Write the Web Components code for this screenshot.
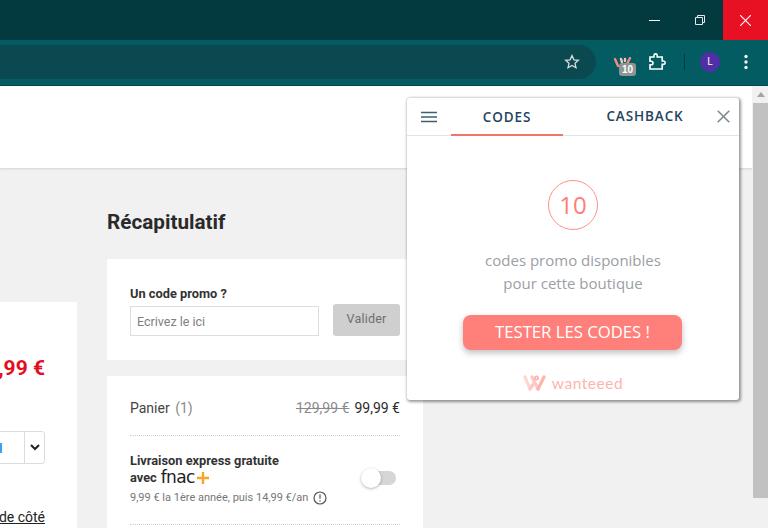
<!DOCTYPE html>
<html lang="fr">
<head>
<meta charset="utf-8">
<title>Récapitulatif</title>
<style>
  html, body { margin: 0; height: 100%; overflow: hidden; }
  body { width: 768px; height: 528px; display: flex; flex-direction: column; font-family: Roboto, sans-serif; background: #f1f1f1; position: relative; }
</style>
</head>
<body>
<browser-chrome></browser-chrome>
<shop-page></shop-page>
<wanteeed-popup></wanteeed-popup>

<script>
class BrowserChrome extends HTMLElement {
  constructor() {
    super();
    this.attachShadow({ mode: "open" });
    this.shadowRoot.innerHTML = /* html */`
    <style>
      :host { display: block; flex: none; }
      .title { height: 40px; background: #023a40; display: flex; justify-content: flex-end; }
      .win { width: 46px; display: grid; place-items: center; }
      .win.close { width: 45px; background: #e81123; }
      .win svg { display: block; }
      .tools { height: 46px; background: #035c62; display: flex; align-items: center; padding-bottom: 1px; box-sizing: border-box; border-bottom: 1px solid #02474c; }
      .url { width: 596px; height: 34px; background: #0b4950; border-radius: 0 17px 17px 0; display: flex; justify-content: flex-end; align-items: center; padding-right: 16px; box-sizing: border-box; }
      .ext { position: relative; width: 24px; height: 24px; margin-left: 17px; }
      .ext svg { display: block; margin-top: 7px; }
      .badge { position: absolute; left: 6px; top: 13px; width: 17px; height: 13px; background: #8f9597; border-radius: 3px; color: #fff; font: 700 10px/13px "Liberation Sans", sans-serif; text-align: center; }
      .puzzle { margin-left: 10px; }
      .sep { width: 1px; height: 16px; background: #023a40; margin-left: 17px; }
      .avatar { width: 20px; height: 20px; border-radius: 50%; background: #512da8; color: #ddd; font: 500 10px/20px Roboto, sans-serif; text-align: center; margin-left: 15px; }
      .dots { margin-left: 24px; display: block; }
    </style>
    <div class="title">
      <div class="win"><svg width="11" height="10"><path d="M0 5.500h11" stroke="#fff"/></svg></div>
      <div class="win"><svg width="10" height="10" fill="none" stroke="#e4e9ea"><path d="M.5 2.500h7v7h-7zM2.500 2.500v-2h7v7h-2"/></svg></div>
      <div class="win close"><svg width="11" height="11" stroke="#fff" stroke-width="1.100"><path d="M0 0l11 11M11 0L0 11"/></svg></div>
    </div>
    <div class="tools">
      <div class="url">
        <svg width="16" height="16" viewBox="0 0 16 16" fill="none" stroke="#d6dddd" stroke-width="1.300"><path d="M8 1.600l1.900 4.200 4.500.5-3.400 3 1 4.500L8 11.500l-4 2.300 1-4.500-3.400-3 4.500-.5z"/></svg>
      </div>
      <div class="ext">
        <svg width="20" height="14" viewBox="0 0 20 14"><g stroke-linecap="round" stroke-width="2.400"><path d="M2 2l3 7" stroke="#f48a84"/><path d="M8 2l1 3" stroke="#f7c6c0"/><path d="M12 2l0 2" stroke="#f7c6c0"/><path d="M17 1l-3 6" stroke="#f48a84"/></g></svg>
        <div class="badge">10</div>
      </div>
      <svg class="puzzle" width="20" height="20" viewBox="0 0 20 20" fill="none" stroke="#fff" stroke-width="1.600"><path d="M3 5h4V3.500a1.600 1.600 0 0 1 3.200 0V5h5v4h1.300a1.700 1.700 0 0 1 0 3.400H15.200V17H3v-4.200h1.200a1.800 1.800 0 0 0 0-3.600H3z"/></svg>
      <div class="sep"></div>
      <div class="avatar">L</div>
      <svg class="dots" width="4" height="16" viewBox="0 0 4 16" fill="#f0f3f3"><circle cx="2" cy="2.500" r="1.700"/><circle cx="2" cy="8" r="1.700"/><circle cx="2" cy="13.500" r="1.700"/></svg>
    </div>`;
  }
}
customElements.define("browser-chrome", BrowserChrome);

class ShopPage extends HTMLElement {
  constructor() {
    super();
    this.attachShadow({ mode: "open" });
    this.shadowRoot.innerHTML = /* html */`
    <style>
      :host { display: flex; flex: 1; min-height: 0; color: #2b2b2b; font-family: Roboto, sans-serif; }
      .main { flex: 1; min-width: 0; overflow: hidden; }
      .head { height: 82px; background: #fff; box-shadow: 0 1px 2px #d4d4d4; }
      .cols { display: flex; align-items: flex-start; padding-top: 41px; }
      .left { width: 77px; flex: none; margin: 93px 30px 0 0; background: #fff; height: 240px; position: relative; overflow: hidden; }
      .price { position: absolute; right: 32px; top: 54px; font: 700 21px/24px Roboto, sans-serif; color: #e2101f; white-space: nowrap; }
      .qty { position: absolute; right: 32px; top: 129px; width: 60px; height: 33px; box-sizing: border-box; border: 1px solid #dcdcdc; border-radius: 3px; background: #fff; display: flex; justify-content: flex-end; }
      .qty::before { content: ""; position: absolute; left: 14px; top: 11px; width: 2px; height: 10px; background: #3aa0ee; }
      .caret { width: 19px; border-left: 1px solid #dcdcdc; display: grid; place-items: center; }
      .later { position: absolute; right: 32px; top: 207px; font-size: 14px; line-height: 17px; text-decoration: underline; color: #222; white-space: nowrap; }
      .right { width: 316px; flex: none; }
      h1 { margin: 0 0 23px; font: 700 20.700px/27px Roboto, sans-serif; color: #2a2a2a; }
      .card { background: #fff; padding: 0 23px; margin-bottom: 16px; }
      .card.long { padding-bottom: 40px; }
      .promo { height: 101px; padding-top: 27px; box-sizing: border-box; }
      .promo b { display: block; font: 700 12.800px/15px Roboto, sans-serif; color: #333; }
      .form { display: flex; align-items: flex-end; margin-top: 3px; gap: 14px; }
      .input { width: 189px; height: 30px; box-sizing: border-box; border: 1px solid #dedede; font-size: 12.500px; line-height: 30px; padding-left: 6px; color: #808080; }
      .btn { width: 67px; height: 32px; background: #cfcfcf; border-radius: 3px; font-size: 12.500px; line-height: 30px; text-align: center; color: #6e6e6e; letter-spacing: .2px; }
      .row { display: flex; justify-content: space-between; align-items: center; }
      .cart { height: 60px; padding-top: 4px; box-sizing: border-box; border-bottom: 1px dotted #cfcfcf; font-size: 14px; color: #444; }
      .count { color: #8a8a8a; margin-left: 2px; }
      .old { color: #8a8a8a; text-decoration: line-through; margin-right: 5px; }
      .now { color: #2b2b2b; }
      .ship { height: 89px; border-bottom: 1px dotted #cfcfcf; padding-top: 16px; box-sizing: border-box; position: relative; }
      .ship b { display: block; font: 700 12.800px/17px Roboto, sans-serif; color: #333; }
      .ship .last { display: flex; align-items: center; gap: 2px; }
      .fnac { font: 400 17px/17px "DejaVu Sans", sans-serif; letter-spacing: -.6px; color: #222; margin-left: 2px; }
      .terms { display: flex; align-items: center; gap: 5px; margin-top: 4px; font-size: 11px; line-height: 16px; color: #777; }
      .toggle { position: absolute; right: 4px; top: 35px; width: 32px; height: 14px; background: #d6d6d6; border-radius: 7px; }
      .toggle::before { content: ""; position: absolute; left: -3px; top: -3px; width: 20px; height: 20px; background: #fff; border-radius: 50%; box-shadow: 0 1px 3px #0000004d; }
      .scroll { width: 16px; flex: none; background: #f1f1f1; display: flex; flex-direction: column; align-items: flex-end; }
      .arrow { height: 17px; width: 15px; display: grid; place-items: center; }
      .thumb { width: 15px; height: 395px; background: #c1c1c1; }
    </style>
    <div class="main">
      <div class="head"></div>
      <div class="cols">
        <div class="left">
          <div class="price">99,99 €</div>
          <div class="qty"><div class="caret"><svg width="10" height="7" viewBox="0 0 10 7" fill="none" stroke="#222" stroke-width="2"><path d="M1 1l4 4 4-4"/></svg></div></div>
          <div class="later">Mettre de côté</div>
        </div>
        <div class="right">
          <h1>Récapitulatif</h1>
          <div class="card promo">
            <b>Un code promo ?</b>
            <div class="form">
              <div class="input">Ecrivez le ici</div>
              <div class="btn">Valider</div>
            </div>
          </div>
          <div class="card long">
            <div class="row cart">
              <span>Panier <span class="count">(1)</span></span>
              <span><span class="old">129,99 €</span><span class="now">99,99 €</span></span>
            </div>
            <div class="ship">
              <b>Livraison express gratuite</b>
              <b class="last">avec <span class="fnac">fnac</span><svg width="12" height="12" viewBox="0 0 12 12" fill="#f6a623"><path d="M4.800 0h2.400v4.800H12v2.400H7.200V12H4.800V7.200H0V4.800h4.800z"/></svg></b>
              <div class="terms">9,99 € la 1ère année, puis 14,99 €/an
                <svg width="14" height="14" viewBox="0 0 14 14" fill="none" stroke="#555" stroke-width="1.200"><circle cx="7" cy="7" r="6"/><path d="M7 3.500v4.200M7 9.300v1.200"/></svg>
              </div>
              <div class="toggle"></div>
            </div>
          </div>
        </div>
      </div>
    </div>
    <div class="scroll">
      <div class="arrow"><svg width="8" height="5"><path d="M4 0l4 5H0z" fill="#a3a3a3"/></svg></div>
      <div class="thumb"></div>
    </div>`;
  }
}
customElements.define("shop-page", ShopPage);

class WanteeedPopup extends HTMLElement {
  constructor() {
    super();
    this.attachShadow({ mode: "open" });
    this.shadowRoot.innerHTML = /* html */`
    <style>
      :host { display: flex; flex-direction: column; align-items: center; position: absolute; left: 407px; top: 98px; width: 332px; height: 302px; background: #fff; border-radius: 3px; box-shadow: 1px 1px 3px 1px #00000066; font-family: "Open Sans", sans-serif; text-align: center; }
      nav { align-self: stretch; height: 38px; box-sizing: border-box; border-bottom: 1px solid #e4e4e4; display: flex; align-items: stretch; color: #1f4560; font-weight: 600; font-size: 13.500px; letter-spacing: .9px; }
      .menu { width: 44px; display: grid; place-items: center; }
      .tab { display: flex; align-items: center; justify-content: center; margin-bottom: -1px; }
      .tab.on { width: 112px; border-bottom: 2px solid #f0756f; box-sizing: border-box; padding-top: 2px; }
      .tab.off { width: 164px; margin: 0 -19px 1px 0; }
      .x { flex: 1; display: grid; place-items: center; }
      .count { width: 48px; height: 48px; border: 1px solid #ff8f8a; border-radius: 50%; margin-top: 44px; font-size: 24px; line-height: 48px; color: #ff7d78; font-weight: 400; }
      p { margin: 19px 0 0; font-size: 15px; line-height: 23px; color: #9aa0a6; }
      .cta { margin: 20px 1px 0 0; width: 219px; height: 35px; background: #ff7f7a; border-radius: 8px; color: #fff; font-size: 16.700px; line-height: 34px; box-shadow: 0 3px 6px #00000040; }
      .brand { display: flex; align-items: center; gap: 6px; margin-top: 23px; color: #ffb3ae; font: 400 15.500px/20px Lato, sans-serif; letter-spacing: .55px; }
    </style>
    <nav>
      <div class="menu"><svg width="16" height="12" viewBox="0 0 16 12" stroke="#3f5f70" stroke-width="1.600"><path d="M0 1.500h16M0 6h16M0 10.500h16"/></svg></div>
      <div class="tab on">CODES</div>
      <div class="tab off">CASHBACK</div>
      <div class="x"><svg width="13" height="13" viewBox="0 0 13 13" stroke="#808a90" stroke-width="1.600"><path d="M.7.700l11.600 11.600M12.300.700L.7 12.300"/></svg></div>
    </nav>
    <div class="count">10</div>
    <p>codes promo disponibles<br>pour cette boutique</p>
    <div class="cta">TESTER LES CODES !</div>
    <div class="brand">
      <svg width="23" height="17" viewBox="0 0 23 17" fill="none" stroke-linecap="round" stroke-width="3.200"><path d="M2 2l5 12" stroke="#ffd6d2"/><path d="M7 14l4-6" stroke="#ffc8c3"/><path d="M9 2l6 12" stroke="#ffc8c3"/><path d="M21 2l-6 12" stroke="#ffb3ae"/><circle cx="13.500" cy="3" r=".9" stroke="#ffb3ae"/></svg>
      <span>wanteeed</span>
    </div>`;
  }
}
customElements.define("wanteeed-popup", WanteeedPopup);
</script>
</body>
</html>
